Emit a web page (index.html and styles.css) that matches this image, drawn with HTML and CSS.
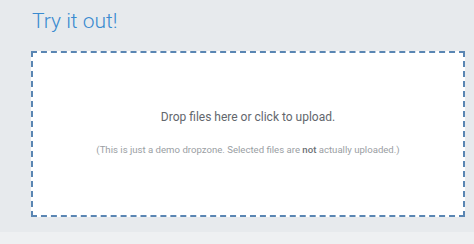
FILE: index.html
```html
<!DOCTYPE html>
<html>
<head>
<meta charset="utf-8">
<link rel="stylesheet" href="styles.css">
</head>
<body>
<div class="page">
  <h1 class="title">Try it out!</h1>
  <div class="dropzone">
    <div class="msg">Drop files here or click to upload.</div>
    <div class="note">(This is just a demo dropzone. Selected files are <strong>not</strong> actually uploaded.)</div>
  </div>
</div>
<div class="footer"></div>
</body>
</html>
```

FILE: styles.css
```css
html, body {
  margin: 0;
  padding: 0;
}
body {
  width: 474px;
  height: 244px;
  background: #e7eaed;
  font-family: Roboto, "Noto Sans", sans-serif;
  display: flex;
  flex-direction: column;
  overflow: hidden;
}
.page {
  padding: 6px 9px 0 31px;
  flex: 1;
}
.title {
  margin: 0 0 15px 1px;
  font-size: 21px;
  font-weight: 300;
  line-height: 30px;
  color: #3a8bd0;
}
.dropzone {
  width: 430px;
  border: 2px dashed #5a86b3;
  background: #ffffff;
  display: flex;
  flex-direction: column;
  align-items: center;
  padding-top: 55px;
  box-sizing: content-box;
  height: 107px;
}
.msg {
  font-size: 12px;
  line-height: 18px;
  color: #63676d;
}
.note {
  margin-top: 17px;
  font-size: 9.6px;
  line-height: 14px;
  color: #9a9ea3;
}
.note strong {
  font-weight: 500;
  color: #6c7075;
}
.footer {
  height: 12px;
  background: #eef0f2;
}
```
